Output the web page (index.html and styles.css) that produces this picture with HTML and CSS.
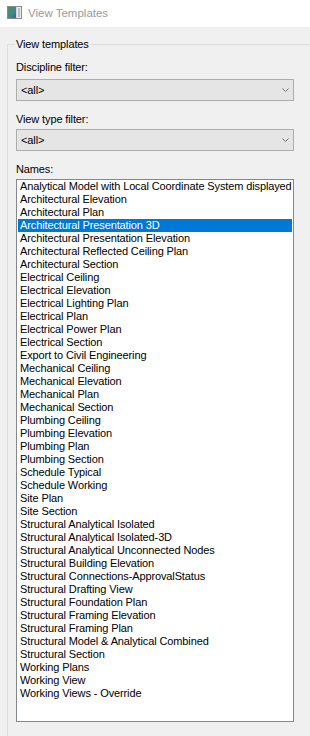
FILE: index.html
```html
<!DOCTYPE html>
<html lang="en">
<head>
<meta charset="utf-8">
<title>View Templates</title>
<link rel="stylesheet" href="styles.css">
</head>
<body>
<div class="titlebar">
  <svg class="app-icon" viewBox="0 0 15 13" aria-hidden="true">
    <defs>
      <linearGradient id="ig" x1="0" y1="0" x2="1" y2="1">
        <stop offset="0" stop-color="#4f8f5c"/>
        <stop offset="0.55" stop-color="#3f8a8a"/>
        <stop offset="1" stop-color="#3a63a8"/>
      </linearGradient>
    </defs>
    <rect x="0.5" y="0.5" width="14" height="12" fill="#ececec" stroke="#8a8a8a"/>
    <rect x="1" y="1" width="8" height="11" fill="url(#ig)"/>
    <rect x="9" y="1" width="1" height="11" fill="#cfd8e0"/>
    <rect x="11" y="2" width="2" height="9" fill="#bdbdbd"/>
  </svg>
  <span class="title">View Templates</span>
</div>
<div class="dialog">
  <fieldset class="group">
    <legend>View templates</legend>
    <div class="field-label first">Discipline filter:</div>
    <div class="select"><span>&lt;all&gt;</span><svg class="chevron" viewBox="0 0 7 4" aria-hidden="true"><path d="M0.5 0.5 L3.5 3.5 L6.5 0.5"/></svg></div>
    <div class="field-label">View type filter:</div>
    <div class="select"><span>&lt;all&gt;</span><svg class="chevron" viewBox="0 0 7 4" aria-hidden="true"><path d="M0.5 0.5 L3.5 3.5 L6.5 0.5"/></svg></div>
    <div class="field-label">Names:</div>
    <div class="listbox">
      <div class="item">Analytical Model with Local Coordinate System displayed</div>
      <div class="item">Architectural Elevation</div>
      <div class="item">Architectural Plan</div>
      <div class="item selected">Architectural Presentation 3D</div>
      <div class="item">Architectural Presentation Elevation</div>
      <div class="item">Architectural Reflected Ceiling Plan</div>
      <div class="item">Architectural Section</div>
      <div class="item">Electrical Ceiling</div>
      <div class="item">Electrical Elevation</div>
      <div class="item">Electrical Lighting Plan</div>
      <div class="item">Electrical Plan</div>
      <div class="item">Electrical Power Plan</div>
      <div class="item">Electrical Section</div>
      <div class="item">Export to Civil Engineering</div>
      <div class="item">Mechanical Ceiling</div>
      <div class="item">Mechanical Elevation</div>
      <div class="item">Mechanical Plan</div>
      <div class="item">Mechanical Section</div>
      <div class="item">Plumbing Ceiling</div>
      <div class="item">Plumbing Elevation</div>
      <div class="item">Plumbing Plan</div>
      <div class="item">Plumbing Section</div>
      <div class="item">Schedule Typical</div>
      <div class="item">Schedule Working</div>
      <div class="item">Site Plan</div>
      <div class="item">Site Section</div>
      <div class="item">Structural Analytical Isolated</div>
      <div class="item">Structural Analytical Isolated-3D</div>
      <div class="item">Structural Analytical Unconnected Nodes</div>
      <div class="item">Structural Building Elevation</div>
      <div class="item">Structural Connections-ApprovalStatus</div>
      <div class="item">Structural Drafting View</div>
      <div class="item">Structural Foundation Plan</div>
      <div class="item">Structural Framing Elevation</div>
      <div class="item">Structural Framing Plan</div>
      <div class="item">Structural Model &amp; Analytical Combined</div>
      <div class="item">Structural Section</div>
      <div class="item">Working Plans</div>
      <div class="item">Working View</div>
      <div class="item">Working Views - Override</div>
    </div>
  </fieldset>
</div>
</body>
</html>
```
FILE: styles.css
```css
* { box-sizing: border-box; }
html, body { margin: 0; padding: 0; height: 100%; }
body {
  background: #f0f0f0;
  font-family: "Liberation Sans", Arial, sans-serif;
  font-size: 11px;
  letter-spacing: -0.12px;
  color: #000;
  overflow: hidden;
}
.titlebar {
  height: 27px;
  background: #fff;
  display: flex;
  align-items: center;
  gap: 6px;
  padding: 0 0 2px 7px;
}
.app-icon { width: 15px; height: 13px; display: block; }
.title { color: #9a9a9a; font-size: 11.5px; letter-spacing: 0; }
.dialog { padding: 0; }
.group {
  margin: 10px -10px 0 7px;
  border: 1px solid #dcdcdc;
  padding: 8px 25px 40px 8px;
  min-width: 0;
}
.group legend {
  margin-left: -1px;
  padding: 0 2px 0 1px;
  line-height: 15px;
}
.field-label {
  line-height: 15px;
  margin: 11px 0 2px;
}
.field-label.first { margin: 0 0 4px; }
.select {
  height: 22px;
  border: 1px solid #adadad;
  background: #e5e5e5;
  display: flex;
  align-items: center;
  justify-content: space-between;
  padding: 0 4px;
}
.chevron { width: 7px; height: 4px; display: block; }
.chevron path { fill: none; stroke: #6d6d6d; stroke-width: 1; }
.listbox {
  height: 543px;
  border: 1px solid #828790;
  background: #fff;
  padding: 0 1px;
  overflow: hidden;
}
.item {
  height: 13px;
  line-height: 13px;
  padding-left: 2px;
  white-space: nowrap;
  overflow: hidden;
}
.item.selected { background: #0078d7; color: #fff; }
```
